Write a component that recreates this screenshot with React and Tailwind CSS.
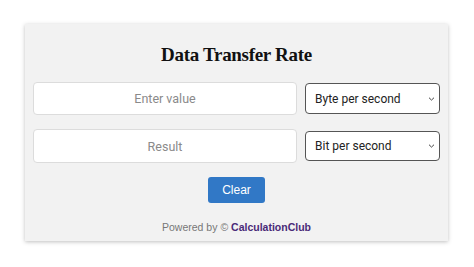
import React, { useState } from "react";

const units = ["Bit per second", "Byte per second", "Kilobit per second", "Kilobyte per second", "Megabit per second", "Megabyte per second"];

const UnitSelect = ({ value, onChange, h }) => (
  <div className="relative w-[135px]">
    <select
      value={value}
      onChange={onChange}
      className={`appearance-none w-full ${h} bg-white border border-[#555] rounded-[4px] pl-[9px] text-[12px] text-[#222] font-['Roboto',sans-serif] outline-none`}
    >
      {units.map((u) => (
        <option key={u} value={u}>{u}</option>
      ))}
    </select>
    <svg
      className="absolute right-[5px] top-1/2 -translate-y-1/2 pointer-events-none"
      width="7"
      height="5"
      viewBox="0 0 7 5"
    >
      <path d="M1 1.2 L3.5 3.6 L6 1.2" fill="none" stroke="#444" strokeWidth="1" />
    </svg>
  </div>
);

const App = () => {
  const [value, setValue] = useState("");
  const [from, setFrom] = useState("Byte per second");
  const [to, setTo] = useState("Bit per second");

  return (
    <div className="w-[474px] h-[267px] bg-white pt-[24px] pl-[25px]">
      <div className="w-[423px] h-[217px] bg-[#f2f2f2] shadow-[0_1px_4px_rgba(0,0,0,0.25)] px-[8px] pt-[18px] flex flex-col">
        <h1 className="text-center font-['Liberation_Serif',serif] font-bold text-[19px] leading-[26px] text-[#111] tracking-[-0.3px]">
          Data Transfer Rate
        </h1>

        <div className="flex items-center gap-[8px] mt-[14px]">
          <input
            type="text"
            value={value}
            onChange={(e) => setValue(e.target.value)}
            placeholder="Enter value"
            className="w-[264px] h-[33px] bg-white border border-[#dcdcdc] rounded-[4px] text-center text-[12.5px] font-['Roboto',sans-serif] placeholder:text-[#8a8a8a] outline-none"
          />
          <UnitSelect value={from} onChange={(e) => setFrom(e.target.value)} h="h-[31px]" />
        </div>

        <div className="flex items-center gap-[8px] mt-[14px]">
          <input
            type="text"
            readOnly
            placeholder="Result"
            className="w-[264px] h-[34px] bg-white border border-[#dcdcdc] rounded-[4px] text-center text-[12.5px] font-['Roboto',sans-serif] placeholder:text-[#8a8a8a] outline-none"
          />
          <UnitSelect value={to} onChange={(e) => setTo(e.target.value)} h="h-[30px]" />
        </div>

        <div className="flex justify-center mt-[14px]">
          <button
            onClick={() => setValue("")}
            className="w-[57px] h-[26px] bg-[#3178c6] text-white rounded-[3px] text-[12px] font-['Liberation_Sans',sans-serif]"
          >
            Clear
          </button>
        </div>

        <p className="text-center mt-[17px] text-[10.5px] font-['Liberation_Sans',sans-serif] text-[#777]">
          Powered by © <span className="font-bold text-[#4a2a78]">CalculationClub</span>
        </p>
      </div>
    </div>
  );
};

export default App;
